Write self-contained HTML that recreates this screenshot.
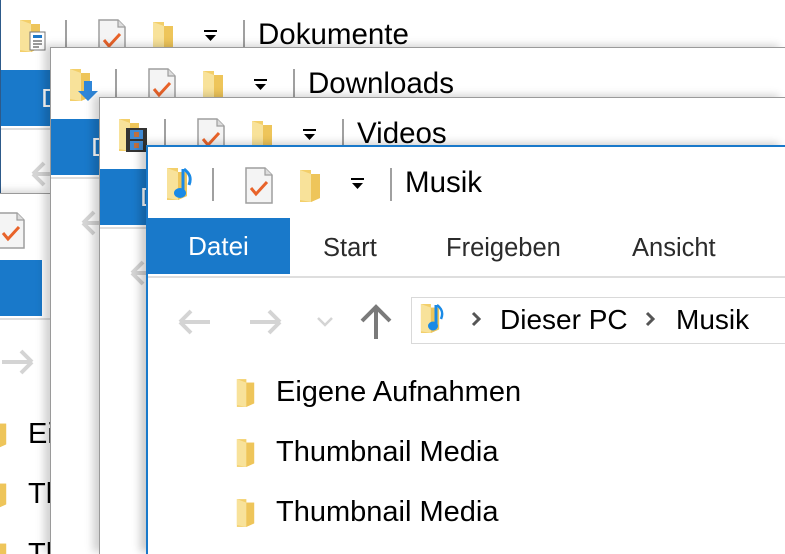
<!DOCTYPE html>
<html><head><meta charset="utf-8">
<style>
*{margin:0;padding:0;box-sizing:border-box}
html,body{width:785px;height:554px;overflow:hidden}
body{background:#fff;position:relative;font-family:"Segoe UI","Liberation Sans","DejaVu Sans",sans-serif}
.w{position:absolute;background:#fff;border-left:1px solid #9a9a9a;border-top:1px solid #9a9a9a;box-shadow:-6px -2px 8px rgba(0,0,0,.18);overflow:hidden}
.w.act{border-left:2px solid #1979ca;border-top:2px solid #1979ca;box-shadow:-6px -2px 8px rgba(0,0,0,.2)}
.a{position:absolute}
.sep{position:absolute;width:2px;height:33px;background:#a0a0a0;top:21px}
.title{position:absolute;left:257px;top:17px;font-size:29.5px;color:#000;white-space:nowrap;line-height:38px}
.datei{position:absolute;left:-1px;top:71px;width:143px;height:56px;background:#1979ca;color:#fff;font-size:26px;line-height:56px;text-align:center}
.tab{position:absolute;top:85px;font-size:25.5px;color:#2b2b2b;line-height:32px}
.hl{position:absolute;left:0;top:129px;width:100%;height:2px;background:#dedede}
.addr{position:absolute;left:263px;top:150px;width:700px;height:47px;border:1px solid #d9d9d9}
.crumb{position:absolute;top:155px;font-size:28px;color:#000;line-height:36px;white-space:nowrap}
.item{position:absolute;left:128px;font-size:29px;color:#000;line-height:36px;white-space:nowrap}
</style></head><body>

<svg width="0" height="0" style="position:absolute">
<defs>
<symbol id="fold" viewBox="0 0 22 34"><path d="M1 1h11v4h9v24l-9 4H1z" fill="#f3cf6a"/><path d="M1 1l11 4v28L1 31z" fill="#f8e29a"/><path d="M12 5l9 0v24l-9 4z" fill="#eec55a"/></symbol>
<symbol id="chk" viewBox="0 0 28 37"><path d="M1 1h19l7 7v28H1z" fill="#f4f4f4" stroke="#9e9e9e" stroke-width="1.5"/><path d="M20 1v7h7" fill="#ddd" stroke="#9e9e9e" stroke-width="1.2"/><path d="M6 21l5 6 11-12" fill="none" stroke="#e8632a" stroke-width="3"/></symbol>
<symbol id="dd" viewBox="0 0 13 13"><rect x="0" y="0" width="13" height="2" fill="#000"/><path d="M1 5h11l-5.5 6z" fill="#000"/></symbol>
<symbol id="nav" viewBox="0 0 260 50">
<path d="M2 25h30M2 25l11-11M2 25l11 11" fill="none" stroke="#d4d4d4" stroke-width="4"/>
<path d="M72 25h30M102 25l-11-11M102 25l-11 11" fill="none" stroke="#d4d4d4" stroke-width="4"/>
<path d="M140 21l7 7 7-7" fill="none" stroke="#d4d4d4" stroke-width="2.5"/>
<path d="M198 42V10M184 24l14-14 14 14" fill="none" stroke="#7a7a7a" stroke-width="4"/>
</symbol>
<symbol id="chev" viewBox="0 0 10 16"><path d="M2 2l6 6-6 6" fill="none" stroke="#555" stroke-width="3"/></symbol>
</defs></svg>

<!-- Dokumente -->
<div class="w" style="left:-1px;top:-2px;width:786px;height:556px;border-left:2px solid #2d5a8a">
 <svg class="a" style="left:18px;top:20px" width="22" height="34"><use href="#fold"/></svg>
 <svg class="a" style="left:28px;top:32px" width="18" height="20"><rect x="1" y="1" width="15" height="18" fill="#fff" stroke="#777"/><rect x="4" y="4" width="9" height="3" fill="#1e78c8"/><path d="M4 10h9M4 13h9M4 16h6" stroke="#333"/></svg>
 <div class="sep" style="left:64px"></div>
 <svg class="a" style="left:97px;top:20px" width="28" height="37"><use href="#chk"/></svg>
 <svg class="a" style="left:150px;top:22px" width="24" height="34"><use href="#fold"/></svg>
 <svg class="a" style="left:203px;top:31px" width="13" height="13"><use href="#dd"/></svg>
 <div class="sep" style="left:242px"></div>
 <div class="title">Dokumente</div>
 <div class="datei">Datei</div>
 <div class="hl"></div>
 <svg class="a" style="left:30px;top:150px" width="260" height="50"><use href="#nav"/></svg>
</div>

<!-- back window lower-left -->
<div class="w" style="left:-101px;top:193px;width:151px;height:361px">
 <svg class="a" style="left:97px;top:18px" width="28" height="37"><use href="#chk"/></svg>
 <div class="datei" style="top:66px">Datei</div>
 <div class="hl" style="top:124px"></div>
 <svg class="a" style="left:30px;top:143px" width="260" height="50"><use href="#nav"/></svg>
 <svg class="a" style="left:88px;top:223px" width="19" height="34"><use href="#fold"/></svg>
 <div class="item" style="top:222px">Eigene Aufnahmen</div>
 <svg class="a" style="left:88px;top:283px" width="19" height="34"><use href="#fold"/></svg>
 <div class="item" style="top:282px">Thumbnail Media</div>
 <svg class="a" style="left:88px;top:343px" width="19" height="34"><use href="#fold"/></svg>
 <div class="item" style="top:342px">Thumbnail Media</div>
</div>

<!-- Downloads -->
<div class="w" style="left:50px;top:47px;width:735px;height:507px">
 <svg class="a" style="left:18px;top:20px" width="22" height="34"><use href="#fold"/></svg>
 <svg class="a" style="left:26px;top:32px" width="22" height="22"><path d="M7 1h8v10h6L11 21 1 11h6z" fill="#2f86d8"/></svg>
 <div class="sep" style="left:64px"></div>
 <svg class="a" style="left:97px;top:20px" width="28" height="37"><use href="#chk"/></svg>
 <svg class="a" style="left:150px;top:22px" width="24" height="34"><use href="#fold"/></svg>
 <svg class="a" style="left:203px;top:31px" width="13" height="13"><use href="#dd"/></svg>
 <div class="sep" style="left:242px"></div>
 <div class="title">Downloads</div>
 <div class="datei">Datei</div>
 <div class="hl"></div>
 <svg class="a" style="left:30px;top:150px" width="260" height="50"><use href="#nav"/></svg>
</div>

<!-- Videos -->
<div class="w" style="left:99px;top:97px;width:686px;height:457px">
 <svg class="a" style="left:18px;top:20px" width="22" height="34"><use href="#fold"/></svg>
 <svg class="a" style="left:26px;top:30px" width="21" height="24"><rect x="0" y="0" width="21" height="24" fill="#333"/><rect x="4" y="2" width="13" height="9" fill="#3f8ad4"/><rect x="4" y="13" width="13" height="9" fill="#3f8ad4"/><rect x="8" y="4" width="5" height="5" fill="#c07040"/><rect x="8" y="15" width="5" height="5" fill="#c07040"/></svg>
 <div class="sep" style="left:64px"></div>
 <svg class="a" style="left:97px;top:20px" width="28" height="37"><use href="#chk"/></svg>
 <svg class="a" style="left:150px;top:22px" width="24" height="34"><use href="#fold"/></svg>
 <svg class="a" style="left:203px;top:31px" width="13" height="13"><use href="#dd"/></svg>
 <div class="sep" style="left:242px"></div>
 <div class="title">Videos</div>
 <div class="datei">Datei</div>
 <div class="hl"></div>
 <svg class="a" style="left:30px;top:150px" width="260" height="50"><use href="#nav"/></svg>
</div>

<!-- Musik (active) -->
<div class="w act" style="left:146px;top:145px;width:639px;height:409px">
 <svg class="a" style="left:18px;top:20px" width="22" height="34"><use href="#fold"/></svg>
 <svg class="a" style="left:26px;top:20px" width="18" height="34"><path d="M9 2v22" stroke="#1a8ae6" stroke-width="3"/><ellipse cx="6" cy="26" rx="6" ry="5" fill="#1a8ae6"/><path d="M10 2c5 4 8 8 5 16" fill="none" stroke="#1a8ae6" stroke-width="3"/></svg>
 <div class="sep" style="left:64px"></div>
 <svg class="a" style="left:97px;top:20px" width="28" height="37"><use href="#chk"/></svg>
 <svg class="a" style="left:150px;top:22px" width="24" height="34"><use href="#fold"/></svg>
 <svg class="a" style="left:203px;top:31px" width="13" height="13"><use href="#dd"/></svg>
 <div class="sep" style="left:242px"></div>
 <div class="title">Musik</div>
 <div class="datei">Datei</div>
 <div class="tab" style="left:175px">Start</div>
 <div class="tab" style="left:298px">Freigeben</div>
 <div class="tab" style="left:484px">Ansicht</div>
 <div class="hl"></div>
 <svg class="a" style="left:30px;top:150px" width="260" height="50"><use href="#nav"/></svg>
 <div class="addr"></div>
 <svg class="a" style="left:272px;top:155px" width="20" height="33"><use href="#fold"/></svg>
 <svg class="a" style="left:280px;top:156px" width="16" height="30"><path d="M8 2v20" stroke="#1a8ae6" stroke-width="3"/><ellipse cx="5" cy="23" rx="5" ry="4.5" fill="#1a8ae6"/><path d="M9 2c4 3 7 7 4 14" fill="none" stroke="#1a8ae6" stroke-width="2.5"/></svg>
 <svg class="a" style="left:323px;top:164px" width="10" height="16"><use href="#chev"/></svg>
 <div class="crumb" style="left:352px">Dieser PC</div>
 <svg class="a" style="left:497px;top:164px" width="10" height="16"><use href="#chev"/></svg>
 <div class="crumb" style="left:528px">Musik</div>
 <svg class="a" style="left:88px;top:229px" width="19" height="34"><use href="#fold"/></svg>
 <div class="item" style="top:227px">Eigene Aufnahmen</div>
 <svg class="a" style="left:88px;top:289px" width="19" height="34"><use href="#fold"/></svg>
 <div class="item" style="top:287px">Thumbnail Media</div>
 <svg class="a" style="left:88px;top:349px" width="19" height="34"><use href="#fold"/></svg>
 <div class="item" style="top:347px">Thumbnail Media</div>
</div>
</body></html>
